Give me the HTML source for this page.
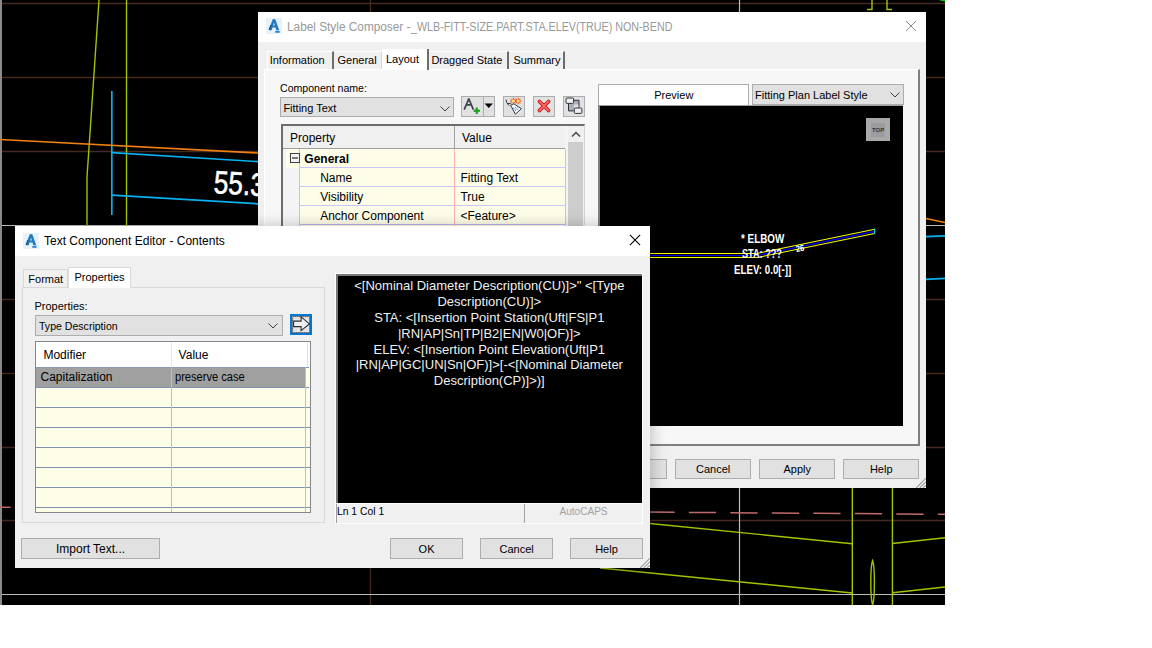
<!DOCTYPE html>
<html><head><meta charset="utf-8">
<style>
*{box-sizing:border-box;margin:0;padding:0}
html,body{width:1152px;height:648px;overflow:hidden;background:#fff;font-family:"Liberation Sans",sans-serif;color:#000}
.a{position:absolute}
.t{position:absolute;white-space:nowrap;line-height:1}
.btn{position:absolute;background:#e1e1e1;border:1px solid #adadad;font-size:12px;text-align:center}
</style></head><body>

<!-- CAD background -->
<div class="a" style="left:0;top:0;width:945px;height:605px;background:#000;overflow:hidden">
<svg class="a" style="left:0;top:0" width="945" height="605" viewBox="0 0 945 605">
<g stroke="#45291c" stroke-width="1.4" fill="none">
<path d="M0 3.5H945M0 77.5H945M0 151.5H945M0 299.5H945M0 373.5H945M0 447.5H945M0 520.5H945"/>
<path d="M370.5 0V605"/>
</g>
<g stroke="#bdbdbd" stroke-width="1.2" fill="none">
<path d="M0 225.5H945M0 594.5H945M739.5 0V605"/>
</g>
<path d="M1 0V605" stroke="#8a8a8a" stroke-width="2"/>
<g stroke="#a0c400" stroke-width="1.4" fill="none">
<path d="M99 0L87 177V226"/>
<path d="M126.5 0V226"/>
<path d="M872 0V9.5H867M887 0V9.5H892"/>
<path d="M650 523.5L852.3 543.7M600 568L852.3 593"/>
<path d="M852.3 488V605M892.4 488V605"/>
<path d="M892.4 543.5L945 537.8M892.4 592.8L945 587"/>
<path d="M872.6 560.5C875 567 875 598 872.6 605C870.2 598 870.2 567 872.6 560.5Z"/>
</g>
<path d="M939 0Q942 1.2 945 1.6V0Z" fill="#00d000"/>
<g stroke="#08b0f0" stroke-width="1.7" fill="none">
<path d="M111.8 91V215"/>
<path d="M111.8 152.6L258 161.6M111.8 195.2L258 203.8"/>
<path d="M926 236.6L945 235.8M926 279.3L945 278.4"/>
</g>
<g stroke="#f08010" stroke-width="1.6" fill="none">
<path d="M0 139.5L258 153M926 218.5L945 222.5"/>
</g>
<path d="M0 507.2L945 514.3" stroke="#c06a6a" stroke-width="1.5" stroke-dasharray="27.3 14.2" stroke-dashoffset="16.65"/>
</svg>
<div class="t" style="left:214.5px;top:166.2px;font-size:32px;color:#fff;-webkit-text-stroke:0.6px #fff;transform:rotate(3.6deg) scaleX(0.82);transform-origin:0 0">55.3</div>
</div>

<!-- Label Style Composer -->
<div id="lsc" class="a" style="z-index:1;left:258px;top:12px;width:668px;height:476px;background:#f0f0f0;overflow:hidden">
 <div class="a" style="left:0;top:0;width:668px;height:30px;background:#fff"></div>
 <svg class="a" style="left:8px;top:6px" width="16" height="16" viewBox="0 0 16 16"><rect width="16" height="16" fill="#e6f1fa"/><path d="M2.8 12.2L6.6 1.6Q8 0.6 9.4 1.6L13.2 12.2H10.3L9.5 9.6H6.5L5.7 12.2ZM7.2 7.4H8.8L8 4.6Z" fill="#1f78c0" fill-rule="evenodd"/><path d="M3.2 11.8L5 7" stroke="#17527e" stroke-width="1.2"/><rect x="9.3" y="12.9" width="4.3" height="1.9" fill="#2a86d0"/></svg>
 <div class="t" style="left:29px;top:9.4px;font-size:12px;color:#999;transform:scaleX(0.985);transform-origin:0 0">Label Style Composer - </div><div class="t" style="left:152.5px;top:9.4px;font-size:12px;color:#999;transform:scaleX(0.893);transform-origin:0 0">_WLB-FITT-SIZE.PART.STA.ELEV(TRUE) NON-BEND</div>
 <svg class="a" style="left:647px;top:8px" width="12" height="12" viewBox="0 0 12 12"><path d="M1 1L11 11M11 1L1 11" stroke="#8a8a8a" stroke-width="1" fill="none"/></svg>
 <!-- tabs -->
 <div class="a" style="left:9px;top:39px;width:66.6px;height:18px;background:#f0f0f0;border-left:1px solid #fff;border-top:1px solid #fff;border-right:2px solid #6d6d6d"></div>
 <div class="t" style="left:11.7px;top:42.6px;font-size:11px">Information</div>
 <div class="a" style="left:75.6px;top:39px;width:48px;height:18px;background:#f0f0f0;border-top:1px solid #fff;border-right:1px solid #d5d5d5"></div>
 <div class="t" style="left:79.5px;top:42.6px;font-size:11px">General</div>
 <div class="a" style="left:123.5px;top:37px;width:47.5px;height:21px;background:#fff;border-left:1px solid #fff;border-right:2px solid #6d6d6d;z-index:2"></div>
 <div class="t" style="left:128px;top:42px;font-size:11px;z-index:3">Layout</div>
 <div class="a" style="left:171px;top:39px;width:80px;height:18px;background:#f0f0f0;border-top:1px solid #fff;border-right:2px solid #6d6d6d"></div>
 <div class="t" style="left:173.4px;top:42.6px;font-size:11px">Dragged State</div>
 <div class="a" style="left:251px;top:39px;width:56px;height:18px;background:#f0f0f0;border-top:1px solid #fff;border-right:2px solid #6d6d6d"></div>
 <div class="t" style="left:255.4px;top:42.6px;font-size:11px">Summary</div>
 <!-- panel -->
 <div class="a" style="left:6px;top:57px;width:656px;height:377px;background:#f7f7f7;border-top:1px solid #fff;border-left:1px solid #fff;border-right:2px solid #808080;border-bottom:2px solid #808080"></div>
 <div class="t" style="left:22px;top:70.8px;font-size:11px;transform:scaleX(0.96);transform-origin:0 0">Component name:</div>
 <div class="a" style="left:22.3px;top:85.3px;width:173.3px;height:20px;background:#e1e1e1;border:1px solid #adadad"></div>
 <div class="t" style="left:25.4px;top:90.7px;font-size:11px">Fitting Text</div>
 <svg class="a" style="left:182px;top:94px" width="10" height="6" viewBox="0 0 10 6"><path d="M0.5 0.5L5 5L9.5 0.5" stroke="#404040" fill="none"/></svg>
 <!-- toolbar buttons -->
 <div class="a" style="left:203.2px;top:84.3px;width:33.6px;height:20.4px;background:#e1e1e1;border:1px solid #adadad"></div>
 <div class="a" style="left:225.2px;top:85px;width:1px;height:19px;background:#adadad"></div>
 <svg class="a" style="left:203.2px;top:84.3px" width="34" height="21" viewBox="0 0 34 21"><path d="M3.2 13.7L7.8 2.8L12.4 13.7M5 8.9H10.7" stroke="#3c4350" stroke-width="1.7" fill="none" stroke-linejoin="round"/><path d="M12.6 14.7H19M15.8 11.5V17.9" stroke="#12a012" stroke-width="2.1"/><path d="M23.6 7.6H31.9L27.75 11.9Z" fill="#000"/></svg>
 <div class="a" style="left:245.3px;top:84.3px;width:21.4px;height:20.4px;background:#e1e1e1;border:1px solid #adadad"></div>
 <svg class="a" style="left:245.3px;top:84.3px" width="22" height="21" viewBox="0 0 22 21"><path d="M7.6 9.2L10.8 7.8L18.4 12.6L12.4 18.2Z" fill="#fff" stroke="#2f3440" stroke-width="1" stroke-linejoin="round"/><path d="M10.3 12.6L14.4 10.6M11.8 14.4L15.6 12.2" stroke="#2b86d6" stroke-width="1.3" stroke-dasharray="1.1 0.9"/><path d="M3 3.6Q3.2 7 6 9.6M4.4 7.6L7.8 7.4" stroke="#2f3440" stroke-width="1" fill="none"/><g stroke="#f03a00" stroke-width="1"><path d="M10.4 1.7V8.3M7.1 5H13.7M8.1 2.7L12.7 7.3M12.7 2.7L8.1 7.3"/><path d="M15.2 1.7V8.3M11.9 5H18.5M12.9 2.7L17.5 7.3M17.5 2.7L12.9 7.3"/></g><circle cx="10.4" cy="5" r="1.5" fill="#ffe070"/><circle cx="15.2" cy="5" r="1.5" fill="#ffe070"/></svg>
 <div class="a" style="left:275.2px;top:84.2px;width:21.5px;height:20.5px;background:#e1e1e1;border:1px solid #adadad"></div>
 <svg class="a" style="left:275px;top:84.2px" width="22" height="21" viewBox="0 0 22 21"><path d="M6.4 5.4L15.6 14.6M15.6 5.4L6.4 14.6" stroke="#c8101a" stroke-width="3.6" stroke-linecap="round"/><path d="M6.4 5.4L15.6 14.6M15.6 5.4L6.4 14.6" stroke="#ff6a62" stroke-width="1.9" stroke-linecap="round"/></svg>
 <div class="a" style="left:305.2px;top:84.2px;width:21.5px;height:20.5px;background:#e1e1e1;border:1px solid #adadad"></div>
 <svg class="a" style="left:305.2px;top:84.2px" width="22" height="21" viewBox="0 0 22 21"><path d="M5.5 7.5V14.9H11V8.5H16V4.3H10.5V7.5Z" fill="#aab0ba"/><path d="M5.5 8V14.9H10.5M10.5 4.3H16V11.5" stroke="#2b3038" stroke-width="1" fill="none"/><rect x="3" y="2" width="7.6" height="5.4" rx="1" fill="#eef0f4" stroke="#2b3038" stroke-width="1"/><rect x="11.3" y="12" width="7.6" height="5.4" rx="1" fill="#eef0f4" stroke="#2b3038" stroke-width="1"/></svg>
 <!-- property grid -->
 <div class="a" style="left:23px;top:112px;width:304px;height:120px;background:#f4f4f4;border-top:2px solid #6d6d6d;border-left:2px solid #6d6d6d"></div>
 <div class="a" style="left:25px;top:114px;width:282px;height:23px;background:#f0f0f0;border-bottom:1px solid #a0a0a0"></div>
 <div class="a" style="left:196px;top:114px;width:1px;height:22px;background:#a0a0a0"></div>
 <div class="t" style="left:32px;top:120px;font-size:12px">Property</div>
 <div class="t" style="left:204px;top:120px;font-size:12px">Value</div>
 <div class="a" style="left:309.5px;top:114px;width:16.5px;height:112px;background:#f0f0f0"></div>
 <svg class="a" style="left:312px;top:118px" width="12" height="9" viewBox="0 0 12 9"><path d="M2 6.5L6 2.5L10 6.5" stroke="#404040" stroke-width="1.4" fill="none"/></svg>
 <div class="a" style="left:310.3px;top:130px;width:14.4px;height:100px;background:#cdcdcd"></div>
 <div class="a" style="left:28px;top:137px;width:280px;height:19px;background:#fefde8"></div>
 <div class="a" style="left:42px;top:156px;width:266px;height:70px;background:#fefde8"></div><div class="a" style="left:307.3px;top:137px;width:1px;height:90px;background:#ffb0b0"></div><div class="a" style="left:326px;top:113px;width:1px;height:100px;background:#d4d4d4"></div>
 <div class="a" style="left:42px;top:155px;width:266px;height:1px;background:#c8c8ff"></div>
 <div class="a" style="left:42px;top:174px;width:266px;height:1px;background:#c8c8ff"></div>
 <div class="a" style="left:42px;top:193px;width:266px;height:1px;background:#c8c8ff"></div><div class="a" style="left:42px;top:212.2px;width:266px;height:1.2px;background:#b8b8f0"></div>
 <div class="a" style="left:41px;top:137px;width:1px;height:90px;background:#ffb0b0"></div>
 <div class="a" style="left:196px;top:137px;width:1px;height:90px;background:#ffb0b0"></div>
 <svg class="a" style="left:32px;top:141px" width="10" height="10" viewBox="0 0 10 10"><rect x="0.5" y="0.5" width="9" height="9" fill="#f4f4f4" stroke="#404040"/><path d="M2 5H8" stroke="#000"/></svg>
 <div class="t" style="left:46.3px;top:141px;font-size:12px;font-weight:bold">General</div>
 <div class="t" style="left:62.2px;top:160px;font-size:12px">Name</div>
 <div class="t" style="left:202.4px;top:160px;font-size:12px">Fitting Text</div>
 <div class="t" style="left:62.2px;top:179px;font-size:12px">Visibility</div>
 <div class="t" style="left:202.4px;top:179px;font-size:12px">True</div>
 <div class="t" style="left:62.2px;top:198px;font-size:12px">Anchor Component</div>
 <div class="t" style="left:202.4px;top:198px;font-size:12px">&lt;Feature&gt;</div>
 <!-- preview -->
 <div class="a" style="left:340.3px;top:72.4px;width:151px;height:21px;background:#fff;border:1px solid #adadad;border-bottom:none"></div>
 <div class="t" style="left:340.3px;width:151px;text-align:center;top:78px;font-size:11px">Preview</div>
 <div class="a" style="left:493.5px;top:72.4px;width:152px;height:21px;background:#e1e1e1;border:1px solid #adadad"></div>
 <div class="t" style="left:497px;top:78px;font-size:11px">Fitting Plan Label Style</div>
 <svg class="a" style="left:632px;top:80px" width="10" height="6" viewBox="0 0 10 6"><path d="M0.5 0.5L5 5L9.5 0.5" stroke="#404040" fill="none"/></svg>
 <div class="a" style="left:340px;top:93px;width:305px;height:321.4px;background:#000;border-left:2px solid #808080;border-top:1px solid #a0a0a0;overflow:hidden">
  <svg class="a" style="left:0;top:0" width="303" height="321" viewBox="0 0 303 321">
   <g fill="none"><path d="M0 147.5H156.6L274.5 123.3M0 151.5H157.4L274.5 127.5" stroke="#ffff00" stroke-width="1"/><path d="M0 149.5H157L274.5 125.4" stroke="#0000f0" stroke-width="1.2"/><path d="M274.5 122.5V128" stroke="#00d0d0" stroke-width="1.2"/></g>
  </svg>
  <div class="t" style="left:140.8px;top:127.1px;font-size:12px;font-weight:bold;color:#fff;transform:scaleX(0.82);transform-origin:0 0">* ELBOW</div>
  <div class="t" style="left:142.2px;top:142.4px;font-size:12px;font-weight:bold;color:#fff;transform:scaleX(0.76);transform-origin:0 0">STA: ???</div>
  <div class="t" style="left:133.9px;top:157.7px;font-size:12px;font-weight:bold;color:#fff;transform:scaleX(0.81);transform-origin:0 0">ELEV: 0.0[-]]</div>
  <div class="t" style="left:195.5px;top:138.7px;font-size:9px;font-weight:bold;color:#fff;transform:rotate(-10deg) scaleX(0.85);transform-origin:0 50%">26</div>
  <div class="a" style="left:266.4px;top:12.1px;width:23.3px;height:23.3px;background:#a9a9a9"><div class="a" style="left:4.7px;top:5px;width:14px;height:13.6px;background:#9a9ca0"></div><div class="t" style="left:0;width:23.3px;text-align:center;top:8.6px;font-size:6px;font-weight:bold;color:#333">TOP</div></div>
 </div>
 <!-- buttons -->
 <div class="btn" style="left:333.5px;top:447.2px;width:75.8px;height:19.8px"></div>
 <div class="btn" style="left:416.9px;top:447.2px;width:76.4px;height:19.8px"><span class="t" style="position:static;display:block;margin-top:3.5px;font-size:11px">Cancel</span></div>
 <div class="btn" style="left:501.4px;top:447.2px;width:75.8px;height:19.8px"><span class="t" style="position:static;display:block;margin-top:3.5px;font-size:11px">Apply</span></div>
 <div class="btn" style="left:585.1px;top:447.2px;width:76.2px;height:19.8px"><span class="t" style="position:static;display:block;margin-top:3.5px;font-size:11px">Help</span></div>
 <svg class="a" style="left:657px;top:465px" width="11" height="11" viewBox="0 0 11 11"><path d="M0 11L11 0V11Z" fill="#fff"/><path d="M1.2 11L11 1.2M4.6 11L11 4.6M8 11L11 8" stroke="#a0a0a0" stroke-width="1.3"/></svg>
</div>

<!-- Text Component Editor -->
<div id="tce" class="a" style="z-index:2;left:15px;top:226px;width:635px;height:342px;background:#f0f0f0;overflow:hidden;box-shadow:0 2px 16px rgba(0,0,0,0.28)">
 <div class="a" style="left:0;top:0;width:635px;height:29.5px;background:#fff"></div>
 <svg class="a" style="left:8px;top:6.5px" width="16" height="16" viewBox="0 0 16 16"><rect width="16" height="16" fill="#e6f1fa"/><path d="M2.8 12.2L6.6 1.6Q8 0.6 9.4 1.6L13.2 12.2H10.3L9.5 9.6H6.5L5.7 12.2ZM7.2 7.4H8.8L8 4.6Z" fill="#1f78c0" fill-rule="evenodd"/><path d="M3.2 11.8L5 7" stroke="#17527e" stroke-width="1.2"/><rect x="9.3" y="12.9" width="4.3" height="1.9" fill="#2a86d0"/></svg>
 <div class="t" style="left:29px;top:9.4px;font-size:12px">Text Component Editor - Contents</div>
 <svg class="a" style="left:614px;top:8px" width="12" height="12" viewBox="0 0 12 12"><path d="M0.9 0.9L11.1 11.1M11.1 0.9L0.9 11.1" stroke="#000" stroke-width="1.1" fill="none"/></svg>
 <!-- tabs -->
 <div class="a" style="left:8px;top:43px;width:44.5px;height:19px;background:#f0f0f0;border:1px solid #d9d9d9;border-bottom:none"></div>
 <div class="t" style="left:13.3px;top:48px;font-size:11px">Format</div>
 <div class="a" style="left:52.5px;top:41px;width:63.5px;height:21px;background:#fff;border:1px solid #d9d9d9;border-bottom:none;z-index:2"></div>
 <div class="t" style="left:59.4px;top:45.8px;font-size:11px;z-index:3">Properties</div>
 <div class="a" style="left:6.5px;top:61px;width:303px;height:235.6px;background:#f0f0f0;border:1px solid #d9d9d9"></div>
 <div class="t" style="left:19.4px;top:75px;font-size:11px">Properties:</div>
 <div class="a" style="left:20px;top:89.3px;width:247.8px;height:20.5px;background:#e1e1e1;border:1px solid #adadad"></div>
 <div class="t" style="left:24.2px;top:95px;font-size:11px;transform:scaleX(0.96);transform-origin:0 0">Type Description</div>
 <svg class="a" style="left:253px;top:97px" width="10" height="6" viewBox="0 0 10 6"><path d="M0.5 0.5L5 5L9.5 0.5" stroke="#404040" fill="none"/></svg>
 <div class="a" style="left:274.9px;top:87.9px;width:22.1px;height:21.1px;background:#e5e5e5;border:2px solid #0078d7"></div>
 <svg class="a" style="left:274.9px;top:87.9px" width="23" height="22" viewBox="0 0 23 22"><rect x="2.6" y="2.6" width="17" height="16" fill="none" stroke="#000" stroke-width="1" stroke-dasharray="1 1"/><path d="M3.6 7.1H11.1V2.9L19.4 9.9L11.1 16.7V12.6H3.6Z" fill="#eef0f4" stroke="#2b2f36" stroke-width="1.1" stroke-linejoin="miter"/></svg>
 <!-- grid -->
 <div class="a" style="left:20px;top:115px;width:275.8px;height:171.7px;background:#fefde8;border:1px solid #828790"></div>
 <div class="a" style="left:21px;top:116px;width:273.8px;height:25px;background:#fff"></div>
 <div class="a" style="left:156px;top:116px;width:1px;height:25px;background:#e5e5e5"></div>
 <div class="a" style="left:291.6px;top:117px;width:1px;height:23px;background:#e0e0e0"></div>
 <div class="t" style="left:28.4px;top:123px;font-size:12px">Modifier</div>
 <div class="t" style="left:163.6px;top:123px;font-size:12px">Value</div>
 <div class="a" style="left:21px;top:141px;width:269.4px;height:20.5px;background:#a0a0a0;border-top:1px solid #8a9bb0;border-bottom:1px solid #7e93ad"></div><div class="a" style="left:291px;top:141px;width:3px;height:1px;background:#7e93ad"></div><div class="a" style="left:291px;top:160.5px;width:3px;height:1px;background:#7e93ad"></div>
 <div class="t" style="left:25.5px;top:145px;font-size:12px">Capitalization</div>
 <div class="t" style="left:159.6px;top:145px;font-size:12px;transform:scaleX(0.925);transform-origin:0 0">preserve case</div>
 <div class="a" style="left:21px;top:181px;width:273.8px;height:1px;background:#7e93ad"></div>
 <div class="a" style="left:21px;top:201px;width:273.8px;height:1px;background:#7e93ad"></div>
 <div class="a" style="left:21px;top:221px;width:273.8px;height:1px;background:#7e93ad"></div>
 <div class="a" style="left:21px;top:241px;width:273.8px;height:1px;background:#7e93ad"></div>
 <div class="a" style="left:21px;top:261px;width:273.8px;height:1px;background:#7e93ad"></div>
 <div class="a" style="left:21px;top:281px;width:273.8px;height:1px;background:#7e93ad"></div>
 <div class="a" style="left:155.5px;top:141px;width:1px;height:145px;background:#f2a9a9"></div>
 <div class="a" style="left:290.4px;top:141px;width:1px;height:145px;background:#f2a9a9"></div>
 <div class="btn" style="left:6.4px;top:312.3px;width:138.3px;height:21px"><span class="t" style="position:static;display:block;margin-top:4px">Import Text...</span></div>
 <!-- editor -->
 <div class="a" style="left:320.3px;top:47px;width:308px;height:250.8px;background:#fff"></div>
 <div class="a" style="left:321px;top:48px;width:306px;height:228.7px;background:#000;border-top:2px solid #787878;border-left:2px solid #787878"></div>
 <div class="a" style="left:322px;top:52.2px;width:304.6px;text-align:center;color:#f0f0f0;font-size:13px;line-height:15.85px;white-space:pre">&lt;[Nominal Diameter Description(CU)]&gt;" &lt;[Type
Description(CU)]&gt;
STA: &lt;[Insertion Point Station(Uft|FS|P1
|RN|AP|Sn|TP|B2|EN|W0|OF)]&gt;
ELEV: &lt;[Insertion Point Elevation(Uft|P1
|RN|AP|GC|UN|Sn|OF)]&gt;[-&lt;[Nominal Diameter
Description(CP)]&gt;)]</div>
 <div class="a" style="left:321px;top:277.6px;width:306px;height:19.2px;background:#f0f0f0;border-left:1px solid #a0a0a0"></div>
 <div class="a" style="left:509.3px;top:277.6px;width:1px;height:19.2px;background:#a0a0a0"></div>
 <div class="t" style="left:321.6px;top:279.9px;font-size:11px;transform:scaleX(0.94);transform-origin:0 0">Ln 1 Col 1</div>
 <div class="t" style="left:510px;width:117px;text-align:center;top:280.2px;font-size:11px;color:#a0a0a0;transform:scaleX(0.916)">AutoCAPS</div>
 <div class="btn" style="left:375.2px;top:312.1px;width:72.7px;height:21px"><span class="t" style="position:static;display:block;margin-top:5px;font-size:11px">OK</span></div>
 <div class="btn" style="left:465.3px;top:312.1px;width:72.6px;height:21px"><span class="t" style="position:static;display:block;margin-top:5px;font-size:11px">Cancel</span></div>
 <div class="btn" style="left:555.3px;top:312.1px;width:72.3px;height:21px"><span class="t" style="position:static;display:block;margin-top:5px;font-size:11px">Help</span></div>
 <svg class="a" style="left:624px;top:331px" width="11" height="11" viewBox="0 0 11 11"><path d="M0 11L11 0V11Z" fill="#fff"/><path d="M1.2 11L11 1.2M4.6 11L11 4.6M8 11L11 8" stroke="#a0a0a0" stroke-width="1.3"/></svg>
</div>

</body></html>
